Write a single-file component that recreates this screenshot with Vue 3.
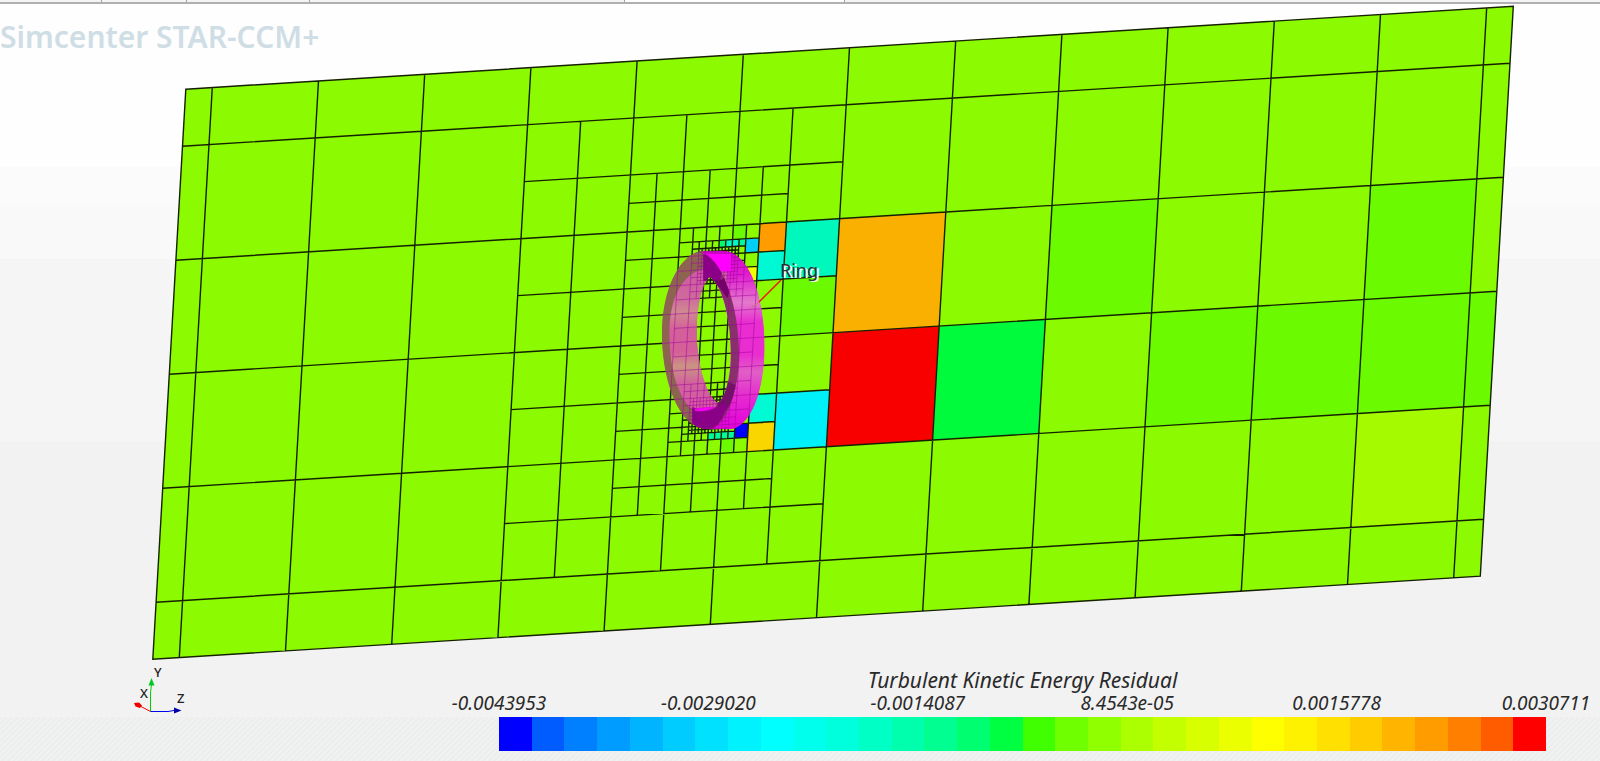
<script setup>
import { ref, computed } from 'vue'

const tabs = ref([102, 85, 123, 315])

const legend = ref({
  title: 'Turbulent Kinetic Energy Residual',
  labels: ['-0.0043953', '-0.0029020', '-0.0014087', '8.4543e-05', '0.0015778', '0.0030711'],
  colors: [
    '#0000ff', '#005cff', '#0080ff', '#009cff', '#00b4ff', '#00ccff', '#00e0ff', '#00f2ff',
    '#00ffff', '#00ffec', '#00ffdc', '#00ffc4', '#00ffac', '#00ff90', '#00ff70', '#00ff40',
    '#40ff00', '#70ff00', '#90ff00', '#acff00', '#c4ff00', '#d8ff00', '#ecff00', '#ffff00',
    '#fff200', '#ffe000', '#ffcc00', '#ffb400', '#ff9c00', '#ff8000', '#ff5c00', '#ff0000'
  ]
})

// plane section: origin and the two cell edge vectors
const origin = [209, 144.5]
const edgeU = [106.2, -6.64]
const edgeV = [-6.6, 114]

const point = (u, v) => {
  const x = origin[0] + u * edgeU[0] + v * edgeV[0]
  const y = origin[1] + u * edgeU[1] + v * edgeV[1]
  return `${x.toFixed(1)} ${y.toFixed(1)}`
}

const quad = (u0, u1, v0, v1) =>
  `M${point(u0, v0)}L${point(u1, v0)}L${point(u1, v1)}L${point(u0, v1)}Z`

const segment = (u0, v0, u1, v1) => `M${point(u0, v0)}L${point(u1, v1)}`

const plane = quad(-0.25, 12.25, -0.5, 4.5)

// cells that differ from the base colour: [u0, u1, v0, v1, color]
const cells = [
  [6, 7, 1, 2, '#f9b000'],
  [6, 7, 2, 3, '#f90000'],
  [7, 8, 2, 3, '#00fa3c'],
  [8, 9, 1, 2, '#6cfa00'],
  [11, 12, 1, 2, '#6cfa00'],
  [9, 12.25, 2, 3, '#6cfa00'],
  [11, 12, 3, 4, '#a6fa00'],
  [5.5, 6, 1, 1.5, '#00f8bc'],
  [5.5, 6, 1.5, 2, '#6cfa00'],
  [5.5, 6, 2.5, 3, '#00f0fa'],
  [5.25, 5.5, 1, 1.25, '#ff9d00'],
  [5.25, 5.5, 1.25, 1.5, '#00f8d4'],
  [5.25, 5.5, 2.5, 2.75, '#00fad4'],
  [5.25, 5.5, 2.75, 3, '#f9d600'],
  [5.125, 5.25, 1.125, 1.25, '#00d0f8'],
  [5.125, 5.25, 1.375, 1.5, '#f0ff00'],
  [5.125, 5.25, 2.75, 2.875, '#0000ff'],
  [5, 5.125, 1, 1.125, '#6cfa00'],
  [5, 5.125, 2.875, 3, '#6cfa00'],
  [4.875, 4.9375, 1.125, 1.1875, '#00fa70'],
  [4.9375, 5.0625, 1.125, 1.1875, '#00f8c8'],
  [5.0625, 5.125, 1.125, 1.1875, '#00fa9c'],
  [4.875, 5.125, 2.8125, 2.875, '#00fa9c']
]

// refinement boxes: each one splits its parent cells in half
const boxes = [
  { step: 0.5, u: [3, 6], v: [0, 4] },
  { step: 0.25, u: [4, 5.5], v: [0.5, 3.5] },
  { step: 0.125, u: [4.5, 5.25], v: [1, 3] },
  { step: 0.0625, u: [4.625, 5.125], v: [1.125, 1.625] },
  { step: 0.0625, u: [4.625, 5.125], v: [2.375, 2.875] },
  { step: 0.03125, u: [4.6875, 5.0625], v: [1.1875, 1.5] },
  { step: 0.03125, u: [4.6875, 5.0625], v: [2.5, 2.8125] }
]

const meshLines = computed(() => {
  let d = plane
  for (let u = 0; u <= 12; u++) d += segment(u, -0.5, u, 4.5)
  for (let v = 0; v <= 4; v++) d += segment(-0.25, v, 12.25, v)
  boxes.forEach(({ step, u, v }) => {
    for (let a = u[0] + step; a < u[1]; a += 2 * step) d += segment(a, v[0], a, v[1])
    for (let b = v[0] + step; b < v[1]; b += 2 * step) d += segment(u[0], b, u[1], b)
  })
  return d
})

// ring outlines in the ring's own units, three to a scene unit
const ringTransform = 'translate(640 230) scale(0.33333)'
const ring = {
  silhouette: 'M190 62C125 66 66 170 66 310C66 460 120 598 205 598H272C330 590 374 490 374 350C374 190 325 62 248 62Z',
  hole: 'M210 140C245 165 274 260 272 380C270 450 255 510 232 518C200 500 170 400 170 310C170 220 190 150 210 140Z',
  leftRim: 'M190 60H60V600H205L165 545C115 510 88 420 88 310C88 210 125 130 190 118Z',
  inside: 'M190 118C125 130 88 210 88 310C88 420 115 510 165 545H262V118Z',
  rightRim: 'M190 72C248 90 297 230 297 370C297 480 262 590 205 598C185 598 165 590 157 580V532Q190 545 215 538Q262 520 272 400C278 280 245 160 210 140L190 150Z',
  topLight: 'M198 72H273V124H242C230 100 215 82 198 72Z',
  topDark: 'M190 72C212 80 232 104 245 130L240 152H190Z',
  topShade: 'M190 150H243L252 144L268 185L262 205L240 175L210 140Z',
  bottomDark: 'M157 532Q205 552 255 518L262 524C248 570 228 598 205 598C185 598 165 590 157 580Z',
  bottomShade: 'M232 518C246 510 256 490 262 455L287 465C280 500 270 530 258 540Q245 535 232 530Z',
  bottomLight: 'M164 536Q200 528 226 532Q200 548 164 542Z'
}
</script>

<template>
  <main class="viewer">
    <div class="tab-strip">
      <span v-for="(width, i) in tabs" :key="i" class="tab" :style="{ flexBasis: width + 'px' }"></span>
      <span class="tab active"></span>
    </div>

    <section class="scene">
      <div class="watermark">Simcenter STAR-CCM+</div>
      <svg class="mesh" viewBox="0 4 1600 656" role="img" aria-label="Mesh section with ring">
        <defs>
          <linearGradient id="outerFill" x1="0" y1="62" x2="0" y2="598" gradientUnits="userSpaceOnUse">
            <stop offset="0" stop-color="#d800d0" />
            <stop offset="0.14" stop-color="#e020d0" />
            <stop offset="0.29" stop-color="#e37acb" />
            <stop offset="0.4" stop-color="#e92dd0" />
            <stop offset="0.58" stop-color="#e92dd0" />
            <stop offset="0.68" stop-color="#e060c4" />
            <stop offset="0.8" stop-color="#e62fcf" />
            <stop offset="1" stop-color="#e400dc" />
          </linearGradient>
          <linearGradient id="innerFill" x1="0" y1="118" x2="0" y2="545" gradientUnits="userSpaceOnUse">
            <stop offset="0" stop-color="#cc5aa0" />
            <stop offset="0.2" stop-color="#cf6a9c" />
            <stop offset="0.3" stop-color="#d08a90" />
            <stop offset="0.42" stop-color="#d4609a" />
            <stop offset="0.58" stop-color="#d4609a" />
            <stop offset="0.68" stop-color="#cb9482" />
            <stop offset="0.8" stop-color="#d0639c" />
            <stop offset="1" stop-color="#d858a4" />
          </linearGradient>
          <clipPath id="bodyClip">
            <path :d="ring.silhouette + ring.hole" :transform="ringTransform" clip-rule="evenodd" />
          </clipPath>
        </defs>

        <path :d="plane" fill="#8cfa00" />
        <path
          v-for="(cell, i) in cells"
          :key="i"
          :d="quad(cell[0], cell[1], cell[2], cell[3])"
          :fill="cell[4]"
        />
        <path :d="meshLines" class="lines" />

        <g clip-path="url(#bodyClip)">
          <g :transform="ringTransform">
            <path :d="ring.silhouette" fill="url(#outerFill)" />
            <path :d="ring.inside" fill="url(#innerFill)" />
            <path :d="ring.leftRim" fill="#8c6450" />
            <path :d="ring.rightRim" fill="#87306b" />
          </g>
          <path :d="meshLines" class="lines ring-lines" />
          <g :transform="ringTransform">
            <path :d="ring.topLight" fill="#ff00ff" />
            <path :d="ring.topDark" fill="#8a0087" />
            <path :d="ring.topShade" fill="#75006c" />
            <path :d="ring.bottomShade" fill="#75106a" />
            <path :d="ring.bottomDark" fill="#8a0087" />
            <path :d="ring.bottomLight" fill="#f000ec" />
          </g>
        </g>

        <path d="M781 280L759 302" class="leader" />
        <path d="M759 302L751 308" class="leader hidden-part" />
        <text x="782" y="278" class="part-label shadow">Ring</text>
        <text x="780" y="277" class="part-label">Ring</text>
      </svg>
    </section>

    <footer class="footer">
      <svg class="triad" viewBox="128 660 64 60" width="64" height="60" role="img" aria-label="Axes">
        <path d="M150.5 711.5L140 706" stroke="#f00" />
        <path d="M134 703L139 702.500L142 705.500L140 708L135.500 706.500Z" fill="#e00" />
        <path d="M150.500 711.500V693L151.500 684" stroke="#00d000" fill="none" />
        <path d="M151.500 678L154.500 685.500H148.500Z" fill="#00c820" />
        <path d="M150.500 711.500H168L174 710.500" stroke="#0000f0" fill="none" />
        <path d="M181.500 710.500L174 707.500V713.500Z" fill="#0000a8" />
        <text x="154" y="677">Y</text>
        <text x="140" y="698">X</text>
        <text x="177" y="703">Z</text>
      </svg>
      <section class="legend">
        <div class="legend-title">{{ legend.title }}</div>
        <div class="legend-labels">
          <span v-for="label in legend.labels" :key="label">{{ label }}</span>
        </div>
        <div class="legend-bar">
          <i v-for="color in legend.colors" :key="color" :style="{ background: color }"></i>
        </div>
      </section>
    </footer>
  </main>
</template>

<style>
body {
  margin: 0;
}
</style>

<style scoped>
.viewer {
  min-height: 100vh;
  display: flex;
  flex-direction: column;
  overflow: hidden;
  color: #2a2a2a;
  font-family: 'Noto Sans', 'Open Sans', sans-serif;
  background: linear-gradient(
    #fefefe 22%,
    #fbfbfb 22%,
    #fbfbfb 27%,
    #f9f9f9 27%,
    #f9f9f9 34%,
    #f5f5f5 34%,
    #f5f5f5 58%,
    #f2f2f2 58%
  );
}

.tab-strip {
  display: flex;
  height: 4px;
  box-sizing: border-box;
  border-bottom: 2px solid #b0b0b0;
  background: #f4f4f4;
}

.tab {
  flex: 0 0 auto;
  box-sizing: border-box;
  border-right: 1px solid #a0a0a0;
}

.tab.active {
  flex-basis: 220px;
  background: #fff;
}

.scene {
  position: relative;
}

.watermark {
  position: absolute;
  top: 13px;
  left: 0;
  font-size: 30px;
  font-weight: 600;
  line-height: 40px;
  color: #cfdde5;
}

.mesh {
  display: block;
  width: 100%;
  height: auto;
}

.lines {
  fill: none;
  stroke: #142000;
  stroke-width: 1.4;
}

.ring-lines {
  stroke: #a000a0;
  stroke-width: 1;
  opacity: 0.5;
}

.leader {
  fill: none;
  stroke: #f01010;
  stroke-width: 1.5;
}

.hidden-part {
  stroke: #d07090;
}

.part-label {
  font-size: 18px;
  fill: #2a3030;
}

.shadow {
  fill: #fff;
}

.footer {
  flex: 1;
  display: grid;
  grid-template-columns: 499fr 1047fr 54fr;
  align-items: start;
  background:
    linear-gradient(#f2f2f2, #f2f2f2) 0 0 / 100% 57px no-repeat,
    repeating-linear-gradient(135deg, #ebeeed 0 2px, #f1f1f1 2px 4px);
}

.triad {
  margin-left: 128px;
  font-size: 13px;
  font-weight: 500;
  fill: #222;
}

.legend {
  padding: 8px 0 10px;
}

.legend-title {
  font-size: 21px;
  line-height: 24px;
  font-style: italic;
  text-align: center;
}

.legend-labels {
  display: grid;
  grid-template-columns: repeat(6, 1fr);
  margin: 0 -10% 3px;
  font-size: 19px;
  line-height: 22px;
  font-style: italic;
  text-align: center;
}

.legend-bar {
  display: flex;
  height: 34px;
}

.legend-bar i {
  flex: 1;
}
</style>
